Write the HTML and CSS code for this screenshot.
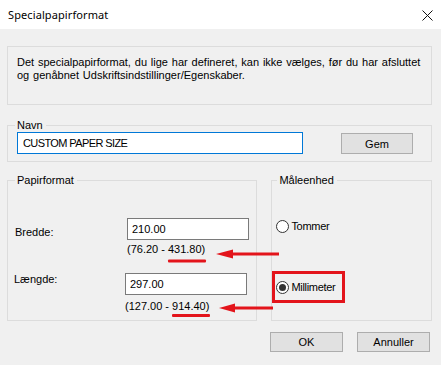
FILE: index.html
```html
<!DOCTYPE html>
<html lang="da">
<head>
  <meta charset="UTF-8">
  <meta name="viewport" content="width=device-width, initial-scale=1.0">
  <title>Specialpapirformat</title>
  <link rel="stylesheet" href="styles.css">
</head>
<body>
  <div class="dialog">
    <div class="titlebar">
      <span class="title">Specialpapirformat</span>
      <svg class="close" width="11" height="11" viewBox="0 0 11 11">
        <path d="M0.5 0.5 L10.5 10.5 M10.5 0.5 L0.5 10.5" stroke="#111" stroke-width="1" fill="none"/>
      </svg>
    </div>

    <div class="content">
      <div class="message">
        Det specialpapirformat, du lige har defineret, kan ikke vælges, før du har afsluttet<br>
        og genåbnet Udskriftsindstillinger/Egenskaber.
      </div>

      <fieldset class="group name-group">
        <legend>Navn</legend>
        <input type="text" class="field name-field" value="CUSTOM PAPER SIZE">
        <button class="btn gem-btn">Gem</button>
      </fieldset>

      <div class="group-row">
        <fieldset class="group format-group">
          <legend>Papirformat</legend>
          <div class="size-row width-row">
            <label class="size-label">Bredde:</label>
            <div class="size-col">
              <input type="text" class="field size-field" value="210.00">
              <div class="range">(76.20 - 431.80)</div>
            </div>
          </div>
          <div class="size-row length-row">
            <label class="size-label">Længde:</label>
            <div class="size-col">
              <input type="text" class="field size-field" value="297.00">
              <div class="range">(127.00 - 914.40)</div>
            </div>
          </div>
        </fieldset>

        <fieldset class="group unit-group">
          <legend>Måleenhed</legend>
          <label class="radio tommer">
            <span class="radio-dot"></span>Tommer
          </label>
          <label class="radio checked marked">
            <span class="radio-dot"></span>Millimeter
          </label>
        </fieldset>
      </div>

      <div class="actions">
        <button class="btn">OK</button>
        <button class="btn">Annuller</button>
      </div>
    </div>

    <!-- red annotations drawn over the dialog -->
    <svg class="marks" width="441" height="365" viewBox="0 0 441 365">
      <g fill="#e3141b" stroke="none">
        <rect x="168" y="259.5" width="38" height="3" rx="1"/>
        <rect x="172" y="314" width="38" height="3" rx="1"/>
        <rect x="230" y="252.5" width="49" height="3"/>
        <polygon points="216,254 233,249.5 233,258.5"/>
        <rect x="233" y="306.5" width="40" height="3"/>
        <polygon points="219,308 235,303.5 235,312.5"/>
      </g>
    </svg>
  </div>
</body>
</html>
```

FILE: styles.css
```css
* {
  box-sizing: border-box;
}
body {
  margin: 0;
  background: #f0f0f0;
  font-family: 'Liberation Sans', Arial, sans-serif;
  font-size: 11px;
  color: #000;
}
.dialog {
  position: relative;
  width: 441px;
  height: 365px;
  background: #f0f0f0;
}
.titlebar {
  height: 29px;
  background: #fff;
  display: flex;
  justify-content: space-between;
  align-items: center;
  padding: 0 8px 0 8px;
}
.title {
  font-family: 'Noto Sans', sans-serif;
  font-size: 11px;
  letter-spacing: 0.1px;
}
.close {
  margin-top: 1px;
}
.content {
  padding: 17px 9px 0 7px;
}
.message {
  height: 59px;
  border: 1px solid #dcdcdc;
  padding: 9px 9px;
  line-height: 13px;
  word-spacing: 0.8px;
  white-space: nowrap;
}
.group {
  margin: 0;
  padding: 0;
  min-width: 0;
  border: 1px solid #dcdcdc;
}
.group legend {
  padding: 0 3px 0 2px;
  line-height: 14px;
  height: 14px;
}
.field {
  height: 22px;
  border: 1px solid #7a7a7a;
  background: #fff;
  font-family: 'Liberation Sans', Arial, sans-serif;
  font-size: 11px;
  padding: 0 4px;
  outline: none;
  color: #000;
}
.btn {
  height: 21px;
  width: 73px;
  background: #e1e1e1;
  border: 1px solid #adadad;
  font-family: 'Liberation Sans', Arial, sans-serif;
  font-size: 11px;
  color: #000;
  padding: 0;
}

/* Navn */
.name-group {
  margin-top: 13px;
  display: flex;
  align-items: flex-start;
  padding: 0 0 7px 9px;
}
.name-group legend {
  margin-left: -2px;
}
.name-field {
  width: 286px;
  border-color: #0078d7;
  padding-left: 5px;
  letter-spacing: -0.6px;
}
.gem-btn {
  width: 72px;
  margin-left: 38px;
  margin-top: 1px;
}

/* Papirformat + Måleenhed */
.group-row {
  display: flex;
  gap: 14px;
  margin-top: 11px;
}
.format-group {
  width: 251px;
  height: 148px;
  padding: 0 0 0 7px;
}
.size-row {
  display: flex;
}
.width-row {
  margin-top: 31px;
}
.length-row {
  margin-top: 17px;
  margin-left: -1px;
}
.size-label {
  width: 112px;
  line-height: 14px;
}
.width-row .size-label {
  margin-top: 7px;
}
.length-row .size-label {
  width: 111px;
  margin-top: -1px;
}
.size-field {
  width: 122px;
}
.range {
  line-height: 13px;
  margin-top: 3px;
}
.length-row .range {
  margin-top: 5px;
}
.unit-group {
  width: 161px;
  height: 148px;
  padding: 0 0 0 4px;
}
.unit-group legend {
  margin-left: 1px;
}
.radio {
  display: flex;
  align-items: center;
  line-height: 14px;
  letter-spacing: -0.3px;
}
.tommer {
  margin-top: 32px;
}
.radio-dot {
  width: 13px;
  height: 13px;
  border: 1px solid #333;
  border-radius: 50%;
  background: #fff;
  margin-right: 2px;
  display: flex;
  align-items: center;
  justify-content: center;
}
.checked .radio-dot::after {
  content: '';
  width: 7px;
  height: 7px;
  border-radius: 50%;
  background: #333;
}
.marked {
  width: 73px;
  height: 32px;
  margin-top: 38px;
  margin-left: -4px;
  border: 3px solid #e3141b;
  padding-left: 1px;
}

/* bottom buttons */
.actions {
  display: flex;
  justify-content: flex-end;
  gap: 14px;
  margin-top: 11px;
  margin-right: 2px;
}
.actions .btn {
  height: 20px;
}

.marks {
  position: absolute;
  left: 0;
  top: 0;
  pointer-events: none;
}
```
